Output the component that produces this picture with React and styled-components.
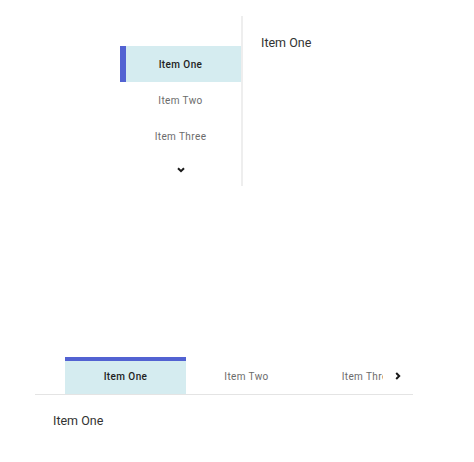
import styled, { createGlobalStyle } from 'styled-components'

const GlobalStyle = createGlobalStyle`
  body {
    margin: 0;
    background: #ffffff;
    font-family: Roboto, "Liberation Sans", sans-serif;
  }
`

const Page = styled.div`
  display: flex;
  flex-direction: column;
  width: 474px;
  height: 462px;
`

const VerticalTabs = styled.div`
  display: flex;
  margin: 16px 0 0 120px;
  height: 170px;
`

const VerticalList = styled.div`
  display: flex;
  flex-direction: column;
  width: 121px;
  border-right: 2px solid #eeeeee;
`

const Spacer = styled.div`
  flex: 0 0 ${(p) => p.size}px;
`

const VerticalTab = styled.div`
  box-sizing: border-box;
  display: flex;
  align-items: center;
  justify-content: center;
  height: 36px;
  font-size: 10px;
  font-weight: ${(p) => (p.active ? 500 : 400)};
  letter-spacing: 0.4px;
  color: ${(p) => (p.active ? '#222222' : '#6b6b6b')};
  background: ${(p) => (p.active ? '#d5ecf0' : 'transparent')};
  border-left: 6px solid ${(p) => (p.active ? '#5262d2' : 'transparent')};
  padding-right: 6px;
`

const ScrollButton = styled.div`
  display: flex;
  align-items: center;
  justify-content: center;
  flex: 0 0 ${(p) => p.size}px;
  color: #1a1a1a;
`

const Panel = styled.div`
  padding: ${(p) => p.pad};
  font-size: 12.5px;
  color: #333333;
`

const HorizontalTabs = styled.div`
  display: flex;
  flex-direction: column;
  margin: 171px 0 0 35px;
  width: 378px;
`

const HorizontalBar = styled.div`
  display: flex;
  height: 37px;
  border-bottom: 1px solid #e4e4e4;
`

const Viewport = styled.div`
  display: flex;
  flex: 1;
  overflow: hidden;
`

const HorizontalTab = styled.div`
  box-sizing: border-box;
  flex: 0 0 121px;
  display: flex;
  align-items: center;
  justify-content: center;
  padding-bottom: 3px;
  font-size: 10px;
  font-weight: ${(p) => (p.active ? 500 : 400)};
  letter-spacing: 0.4px;
  color: ${(p) => (p.active ? '#222222' : '#6b6b6b')};
  background: ${(p) => (p.active ? '#d5ecf0' : 'transparent')};
  border-top: 4px solid ${(p) => (p.active ? '#5262d2' : 'transparent')};
`

const Chevron = ({ rotate }) => (
  <svg width="10" height="10" viewBox="0 0 10 10" style={{ transform: `rotate(${rotate}deg)` }}>
    <path d="M2 3.2 L5 6.2 L8 3.2" fill="none" stroke="currentColor" strokeWidth="2" />
  </svg>
)

const items = ['Item One', 'Item Two', 'Item Three']

export default function App() {
  return (
    <Page>
      <GlobalStyle />
      <VerticalTabs>
        <VerticalList>
          <Spacer size={30} />
          {items.map((item, i) => (
            <VerticalTab key={item} active={i === 0}>
              {item}
            </VerticalTab>
          ))}
          <ScrollButton size={32}>
            <Chevron rotate={0} />
          </ScrollButton>
        </VerticalList>
        <Panel pad="19px 0 0 18px">Item One</Panel>
      </VerticalTabs>
      <HorizontalTabs>
        <HorizontalBar>
          <Spacer size={30} />
          <Viewport>
            {items.map((item, i) => (
              <HorizontalTab key={item} active={i === 0}>
                {item}
              </HorizontalTab>
            ))}
          </Viewport>
          <ScrollButton size={30}>
            <Chevron rotate={-90} />
          </ScrollButton>
        </HorizontalBar>
        <Panel pad="18px 0 0 18px">Item One</Panel>
      </HorizontalTabs>
    </Page>
  )
}
